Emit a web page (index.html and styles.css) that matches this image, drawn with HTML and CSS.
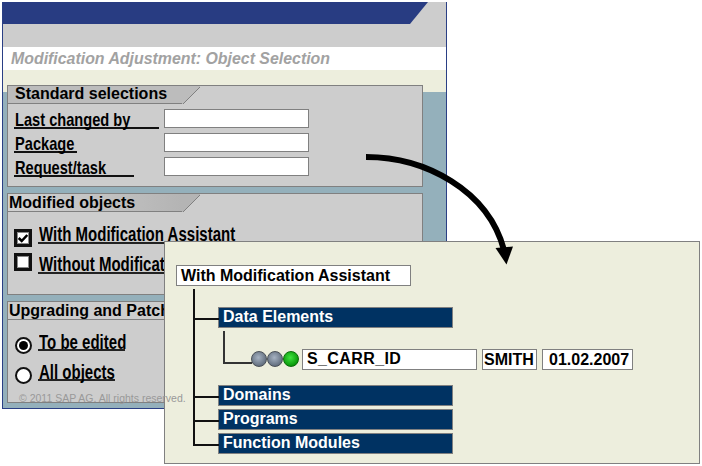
FILE: index.html
```
<!DOCTYPE html>
<html lang="en">
<head>
<meta charset="utf-8">
<title>Modification Adjustment</title>
<link rel="stylesheet" href="styles.css">
</head>
<body>
<div class="stage">
  <section class="window">
    <div class="band"><div class="band-fill"></div></div>
    <div class="toolbar"></div>
    <h1 class="title">Modification Adjustment: Object Selection</h1>
    <div class="content">
      <div class="panel">
        <div class="tab tab-first">Standard selections</div>
        <div class="fields">
          <div class="field"><span class="label lbl-a"><span class="narrow">Last changed by</span></span><span class="input"></span></div>
          <div class="field"><span class="label lbl-b"><span class="narrow">Package</span></span><span class="input"></span></div>
          <div class="field"><span class="label lbl-c"><span class="narrow">Request/task</span></span><span class="input"></span></div>
        </div>
      </div>
      <div class="panel">
        <div class="tab tab-grad">Modified objects</div>
        <div class="options">
          <div class="option"><span class="check check-a"><svg width="14" height="14" viewBox="0 0 14 14"><path d="M2 7l3.500 3.500L12 3.500" fill="none" stroke="#000" stroke-width="3"/></svg></span><span class="opt-text opt-a"><span class="narrow">With Modification Assistant</span></span></div>
          <div class="option"><span class="check check-b"></span><span class="opt-text opt-b"><span class="narrow">Without Modificat</span></span></div>
        </div>
      </div>
      <div class="panel">
        <div class="tab tab-full">Upgrading and Patch</div>
        <div class="options options-radio">
          <div class="option"><span class="radio on"></span><span class="opt-text opt-c"><span class="narrow">To be edited</span></span></div>
          <div class="option"><span class="radio"></span><span class="opt-text opt-d"><span class="narrow">All objects</span></span></div>
        </div>
      </div>
    </div>
  </section>

  <section class="popup">
    <div class="root">With Modification Assistant</div>
    <div class="tree">
      <div class="bar">Data Elements</div>
      <div class="sub">
        <span class="led grey"></span><span class="led grey"></span><span class="led green"></span>
        <span class="box box-id">S_CARR_ID</span><span class="box box-user">SMITH</span><span class="box box-date">01.02.2007</span>
      </div>
      <div class="bar">Domains</div>
      <div class="bar bar-next">Programs</div>
      <div class="bar bar-next">Function Modules</div>
    </div>
  </section>

  <p class="copyright">© 2011 SAP AG. All rights reserved.</p>

  <svg class="arrow" width="702" height="466" viewBox="0 0 702 466">
    <path d="M366 157C425 157 488 190 504 250" fill="none" stroke="#000" stroke-width="6"/>
    <path d="M495.500 248L513 246.500L506.500 264.500Z" fill="#000"/>
  </svg>
</div>
</body>
</html>
```
FILE: styles.css
```
* { box-sizing: border-box; }
html, body { margin: 0; padding: 0; background: #fff; }
.stage {
  position: relative;
  width: 702px;
  height: 466px;
  overflow: hidden;
  font-family: "Liberation Sans", Arial, sans-serif;
  color: #000;
}

/* Back window */
.window {
  position: absolute;
  left: 2px;
  top: 2px;
  width: 445px;
  height: 407px;
  display: flex;
  flex-direction: column;
  border: 1px solid #2a3f85;
  border-top: 0;
  background: #fff;
}
.band { height: 22px; background: #cdcdcd; flex: none; }
.band-fill {
  height: 100%;
  background: #283c82;
  clip-path: polygon(0 0, 425px 0, 407px 100%, 0 100%);
}
.toolbar { height: 23px; background: #cdcdcd; flex: none; }
.title {
  margin: 0;
  height: 23px;
  flex: none;
  padding-left: 8px;
  font-size: 15.900px;
  line-height: 23px;
  font-weight: bold;
  font-style: italic;
  color: #a2a2a2;
  background: #fff;
}
.content {
  flex: 1;
  display: flex;
  flex-direction: column;
  gap: 6px;
  padding: 15px 23px 0 4px;
  background: linear-gradient(#edeedd 22px, #94b0bb 22px);
}
.panel {
  height: 102px;
  background: #cdcdcd;
  border: 1px solid #808080;
  flex: none;
}
.tab {
  height: 18px;
  width: 192px;
  font-size: 16px;
  line-height: 17px;
  font-weight: bold;
  padding-left: 1px;
  white-space: nowrap;
}
.tab-first {
  padding-left: 7px;
  line-height: 15px;
  background:
    linear-gradient(#808080, #808080) 0 100% / 174px 1px no-repeat,
    linear-gradient(to bottom right, #bcbcbc 50%, #808080 50%, #808080 calc(50% + 1px), transparent calc(50% + 1px)) 174px 0 / 18px 18px no-repeat,
    linear-gradient(#bcbcbc, #bcbcbc) 0 0 / 174px 100% no-repeat;
}
.tab-grad {
  background:
    linear-gradient(#808080, #808080) 0 100% / 174px 1px no-repeat,
    linear-gradient(to bottom right, #b4b4b4 50%, #808080 50%, #808080 calc(50% + 1px), transparent calc(50% + 1px)) 174px 0 / 18px 18px no-repeat,
    linear-gradient(to right, #d2d2d2, #b4b4b4) 0 0 / 174px 100% no-repeat;
}
.tab-full {
  width: 100%;
  background: #cdcdcd;
  border-bottom: 1px solid #808080;
}

/* Tall, condensed label lettering */
.narrow {
  display: inline-block;
  transform: scaleX(0.77);
  transform-origin: 0 50%;
}

/* Form rows */
.fields { padding-top: 5px; display: flex; flex-direction: column; gap: 5px; }
.field { display: flex; height: 19px; padding-left: 6px; }
.label {
  height: 20px;
  font-size: 19px;
  line-height: 22px;
  font-weight: bold;
  padding-left: 1px;
  border-bottom: 2px solid #111;
  white-space: nowrap;
}
.lbl-a { width: 145px; margin-right: 5px; }
.lbl-b { width: 63px; margin-right: 87px; }
.lbl-c { width: 120px; margin-right: 30px; }
.input {
  width: 145px;
  height: 19px;
  background: #fff;
  border: 1px solid #808080;
}

.options { padding: 12px 0 0 6px; display: flex; flex-direction: column; gap: 10px; }
.options-radio { padding-top: 11px; }
.option { display: flex; align-items: flex-start; height: 20px; }
.check {
  width: 18px;
  height: 18px;
  margin-right: 6px;
  background: #fff;
  border: 3px solid #111;
  box-shadow: 0 0 0 1px #8a8a8a inset;
  flex: none;
  display: flex;
  align-items: center;
  justify-content: center;
}
.check-a { margin-top: 5px; }
.check-b { margin-top: -1px; }
.radio {
  width: 17px;
  height: 17px;
  margin: 6px 6px 0 1px;
  border: 2px solid #111;
  border-radius: 50%;
  background: #fff;
  flex: none;
  position: relative;
}
.radio.on::after {
  content: "";
  position: absolute;
  left: 2px;
  top: 2px;
  width: 9px;
  height: 9px;
  border-radius: 50%;
  background: #000;
}
.opt-text {
  height: 20px;
  font-size: 19.500px;
  line-height: 20px;
  font-weight: bold;
  padding-left: 1px;
  border-bottom: 2px solid #222;
  white-space: nowrap;
}
.options-radio .opt-text { line-height: 22px; }
.opt-a { width: 197px; }
.opt-b { width: 140px; }
.opt-c { width: 87px; }
.opt-d { width: 77px; }

/* Front popup */
.popup {
  position: absolute;
  left: 164px;
  top: 241px;
  width: 536px;
  height: 223px;
  padding: 23px 0 0 11px;
  background: #edeedd;
  border: 1px solid #808080;
}
.root {
  width: 235px;
  height: 21px;
  padding-left: 4px;
  font-size: 16px;
  line-height: 19px;
  font-weight: bold;
  background: #fff;
  border: 1px solid #808080;
}
.tree {
  position: relative;
  margin: 3px 0 0 17px;
  padding: 18px 0 0 25px;
}
.tree::before {
  content: "";
  position: absolute;
  left: 0;
  top: 0;
  bottom: 8px;
  width: 2px;
  background: #111;
}
.bar {
  position: relative;
  width: 235px;
  height: 21px;
  padding-left: 4px;
  background: #003262;
  border: 1px solid #808080;
  color: #fff;
  font-size: 16px;
  line-height: 18px;
  font-weight: bold;
}
.bar::before {
  content: "";
  position: absolute;
  left: -25px;
  top: 10px;
  width: 25px;
  height: 2px;
  background: #111;
}
.bar-next { margin-top: 3px; }
.sub {
  position: relative;
  height: 57px;
  display: flex;
  align-items: flex-start;
  padding: 21px 0 0 32px;
  margin-left: 1px;
}
.sub::before {
  content: "";
  position: absolute;
  left: 4px;
  top: 3px;
  width: 27px;
  height: 31px;
  border-left: 2px solid #333;
  border-bottom: 2px solid #333;
}
.led {
  width: 16px;
  height: 16px;
  margin-top: 2px;
  border-radius: 50%;
  flex: none;
  border: 1px solid #4a5058;
}
.led.grey { background: radial-gradient(circle at 45% 40%, #a6b2c2, #5c6878 80%); }
.led.green { background: radial-gradient(circle at 45% 40%, #3fe33f, #008a00 85%); border-color: #0b6b0b; }
.box {
  display: block;
  height: 21px;
  background: #fff;
  border: 1px solid #808080;
  font-size: 16px;
  line-height: 18px;
  font-weight: bold;
  white-space: nowrap;
}
.box-id { width: 175px; margin-left: 3px; padding-left: 4px; letter-spacing: 0.4px; }
.box-user { width: 55px; margin-left: 5px; padding-left: 1px; line-height: 20px; }
.box-date { width: 91px; margin-left: 5px; padding-left: 6px; line-height: 20px; }

.copyright {
  position: absolute;
  left: 19px;
  top: 392px;
  margin: 0;
  font-size: 10.500px;
  line-height: 12px;
  color: #999;
  white-space: nowrap;
}
.arrow { position: absolute; left: 0; top: 0; pointer-events: none; }
```
